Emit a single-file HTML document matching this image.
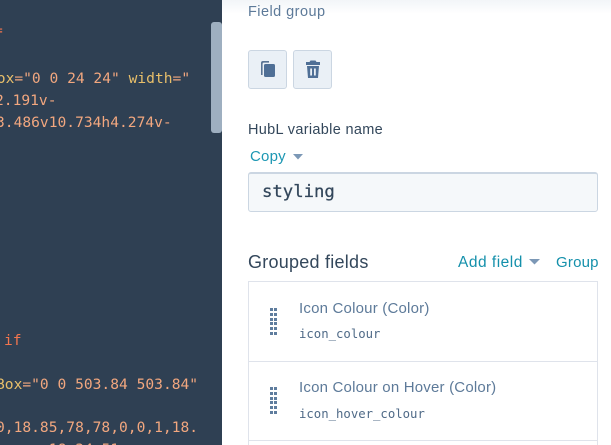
<!DOCTYPE html>
<html>
<head>
<meta charset="utf-8">
<style>
html,body{margin:0;padding:0;width:611px;height:445px;overflow:hidden;background:#fff}
body{position:relative;font-family:"Liberation Sans",sans-serif}
.a{position:absolute;white-space:pre}
.c{font-family:"DejaVu Sans Mono","Liberation Mono",monospace;font-size:14.6px;line-height:20px;color:#f2a77f}
.y{color:#e8bf6a}
.s{color:#33475b}
.m{font-family:"DejaVu Sans Mono","Liberation Mono",monospace}
.row{position:absolute;left:248px;width:350px;background:#fff;border:1px solid #dfe3eb;box-sizing:border-box}
.dots{position:absolute;left:270px;width:7px;height:27px}
.btn{position:absolute;top:50px;width:39px;height:39px;box-sizing:border-box;background:#eaf0f6;border:1px solid #cbd6e2;border-radius:3px}
.fade{position:absolute;left:222px;top:0;width:389px;height:14px;background:linear-gradient(#f2f5f8,#fff)}
.l{font-size:15px;line-height:17px;color:#5d7a99;letter-spacing:.2px}
</style>
</head>
<body>
<div class="a" style="left:0;top:0;width:222px;height:445px;background:#2f4053"></div>
<div class="a" style="left:211px;top:22px;width:10.5px;height:111px;background:#9eafc0;border-radius:3px"></div>

<div class="a c" style="left:-6px;top:21px;color:#f2754e">=</div>
<div class="a c" style="left:-12px;top:69px"><span class="y">box</span>="0 0 24 24" <span class="y">width</span>="</div>
<div class="a c" style="left:-5px;top:91px">2.191v-</div>
<div class="a c" style="left:-4px;top:113px">3.486v10.734h4.274v-</div>
<div class="a c" style="left:4px;top:331px;color:#f2754e">if</div>
<div class="a c" style="left:-4px;top:375px"><span class="y">Box</span>="0 0 503.84 503.84"</div>
<div class="a c" style="left:-4px;top:418px">0,18.85,78,78,0,0,1,18.</div>
<div class="a c" style="left:5px;top:440px">a  a 18.34 51</div>

<div class="fade"></div>

<div class="a" style="left:248px;top:4px;font-size:14.5px;line-height:17px;color:#5d7a99;letter-spacing:.45px">Field group</div>

<div class="btn" style="left:248px">
<svg width="37" height="37" viewBox="0 0 37 37" style="position:absolute;left:0;top:0">
<path d="M12 12a2 2 0 0 1 2-2h6v1.6h-5.2a1.2 1.2 0 0 0-1.2 1.2V24H12z" fill="#5a7494"/>
<rect x="15" y="13" width="11" height="13" rx="1.6" fill="#4f6f96"/>
</svg>
</div>
<div class="btn" style="left:293px">
<svg width="37" height="37" viewBox="0 0 37 37" style="position:absolute;left:0;top:0">
<path d="M15.5 11l1-1.5h5l1 1.5H26v3H12v-3z" fill="#4f6f96"/>
<path d="M13 15h12l-1 12H14zM16.2 17.5v7h1.8v-7zM20 17.5v7h1.8v-7z" fill="#4f6f96" fill-rule="evenodd"/>
</svg>
</div>

<div class="a s" style="left:248px;top:122px;font-size:14.5px;line-height:17px;letter-spacing:.32px">HubL variable name</div>
<div class="a" style="left:250px;top:148px;font-size:15px;line-height:17px;letter-spacing:.2px;color:#1c97b3">Copy</div>
<svg class="a" style="left:293px;top:154px" width="11" height="6"><path d="M0 0h10L5 5.5z" fill="#7c98b6"/></svg>

<div class="a" style="left:248px;top:172px;width:350px;height:40px;box-sizing:border-box;background:#f5f8fa;border:1px solid #cbd6e2;border-top:2px solid #cbd6e2;border-radius:3px"></div>
<div class="a m s" style="left:262px;top:181px;font-size:17.3px;line-height:22px;-webkit-text-stroke:.25px #33475b">styling</div>

<div class="a s" style="left:248px;top:252px;font-size:18px;line-height:21px;letter-spacing:.25px">Grouped fields</div>
<div class="a" style="left:458px;top:254px;font-size:15.5px;line-height:18px;letter-spacing:.5px;color:#1490ab">Add field</div>
<svg class="a" style="left:529px;top:259px" width="11" height="6"><path d="M0 0h11L5.5 5.5z" fill="#7c98b6"/></svg>
<div class="a" style="left:556px;top:254px;font-size:15px;line-height:18px;letter-spacing:.2px;color:#1490ab">Group</div>

<div class="row" style="top:281px;height:81px"></div>
<div class="row" style="top:361px;height:80px"></div>
<div class="row" style="top:440px;height:20px"></div>

<svg class="dots" style="top:308px" viewBox="0 0 7 27"><g fill="#5f7d9e"><rect x="0" y="0" width="3" height="3"/><rect x="4" y="0" width="3" height="3"/><rect x="0" y="5" width="3" height="3"/><rect x="4" y="5" width="3" height="3"/><rect x="0" y="10" width="3" height="3"/><rect x="4" y="10" width="3" height="3"/><rect x="0" y="14" width="3" height="3"/><rect x="4" y="14" width="3" height="3"/><rect x="0" y="19" width="3" height="3"/><rect x="4" y="19" width="3" height="3"/><rect x="0" y="24" width="3" height="3"/><rect x="4" y="24" width="3" height="3"/></g></svg>
<svg class="dots" style="top:387px" viewBox="0 0 7 27"><g fill="#5f7d9e"><rect x="0" y="0" width="3" height="3"/><rect x="4" y="0" width="3" height="3"/><rect x="0" y="5" width="3" height="3"/><rect x="4" y="5" width="3" height="3"/><rect x="0" y="10" width="3" height="3"/><rect x="4" y="10" width="3" height="3"/><rect x="0" y="14" width="3" height="3"/><rect x="4" y="14" width="3" height="3"/><rect x="0" y="19" width="3" height="3"/><rect x="4" y="19" width="3" height="3"/><rect x="0" y="24" width="3" height="3"/><rect x="4" y="24" width="3" height="3"/></g></svg>

<div class="a l" style="left:299px;top:300px">Icon Colour (Color)</div>
<div class="a m" style="left:299px;top:327px;font-size:12.3px;line-height:15px;color:#4f6a87">icon_colour</div>
<div class="a l" style="left:299px;top:379px">Icon Colour on Hover (Color)</div>
<div class="a m" style="left:299px;top:407px;font-size:12.3px;line-height:15px;color:#4f6a87">icon_hover_colour</div>
</body>
</html>
